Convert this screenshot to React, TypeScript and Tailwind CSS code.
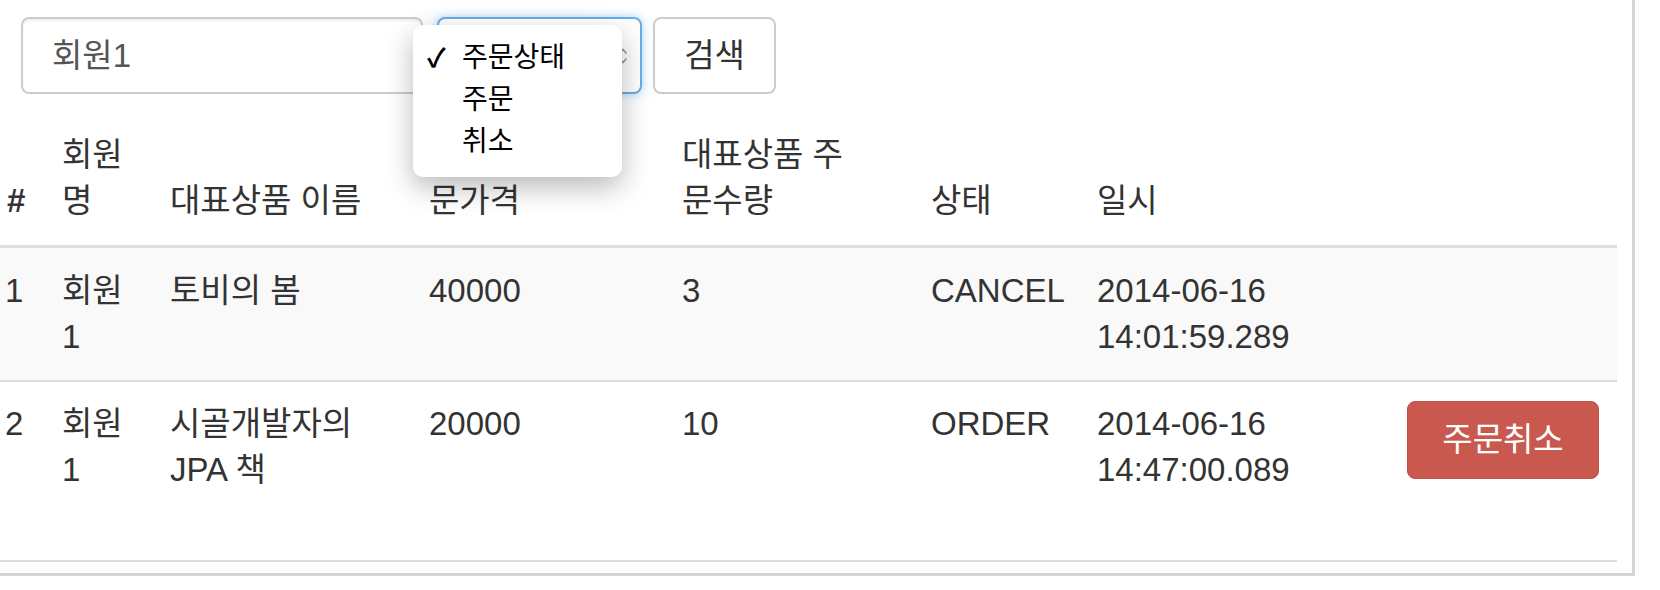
import React from 'react';

type Row = {
  id: string;
  member: string[];
  item: string[];
  price: string;
  count: string;
  status: string;
  date: string[];
  cancelable: boolean;
};

const rows: Row[] = [
  {
    id: '1',
    member: ['회원', '1'],
    item: ['토비의 봄'],
    price: '40000',
    count: '3',
    status: 'CANCEL',
    date: ['2014-06-16', '14:01:59.289'],
    cancelable: false,
  },
  {
    id: '2',
    member: ['회원', '1'],
    item: ['시골개발자의', 'JPA 책'],
    price: '20000',
    count: '10',
    status: 'ORDER',
    date: ['2014-06-16', '14:47:00.089'],
    cancelable: true,
  },
];

const Lines = ({ lines }: { lines: string[] }) => (
  <>
    {lines.map((l, i) => (
      <span key={i} className="block whitespace-nowrap">
        {l}
      </span>
    ))}
  </>
);

export default function App() {
  const th = 'px-[18px] pt-[20px] pb-[21px] align-bottom text-left font-normal border-b-[3px] border-[#dddddd]';
  const td = 'px-[18px] pb-[20px] align-top border-b-2 border-[#dddddd]';

  return (
    <div
      className="relative w-[1660px] h-[590px] bg-white overflow-hidden text-[#333333] text-[33px] leading-[46px]"
      style={{ fontFamily: '"Liberation Sans", "Noto Sans CJK KR", sans-serif' }}
    >
      <div className="w-[1635px] h-[576px] border-r-[3px] border-b-[3px] border-[#d4d4d4] pr-[15px]">
        {/* Search form */}
        <div className="flex items-start pt-[17px] pl-[21px]">
          <div className="w-[402px] h-[77px] border-2 border-[#cccccc] rounded-[8px] flex items-center pl-[29px] text-[#555555] shadow-[inset_0_2px_2px_rgba(0,0,0,0.06)]">
            회원1
          </div>
          <div className="relative ml-[14px] w-[205px] h-[77px] border-2 border-[#66afe9] rounded-[8px] shadow-[0_0_10px_rgba(102,175,233,0.55)]">
            <svg className="absolute right-[12px] top-[28px]" width="10" height="18" viewBox="0 0 10 18">
              <path d="M1.5 6.5 L5 2.5 L8.5 6.5" fill="none" stroke="#9a9a9a" strokeWidth="1.6" />
              <path d="M1.5 11.5 L5 15.5 L8.5 11.5" fill="none" stroke="#9a9a9a" strokeWidth="1.6" />
            </svg>
          </div>
          <button className="ml-[11px] w-[123px] h-[77px] border-2 border-[#cccccc] rounded-[8px] bg-white text-[#333333] flex items-center justify-center">
            검색
          </button>
        </div>

        {/* Orders table */}
        <table className="table-fixed border-separate border-spacing-0 mt-[18px] ml-[-11px] w-[1628px]">
          <colgroup>
            <col className="w-[55px]" />
            <col className="w-[108px]" />
            <col className="w-[259px]" />
            <col className="w-[253px]" />
            <col className="w-[249px]" />
            <col className="w-[166px]" />
            <col className="w-[310px]" />
            <col className="w-[228px]" />
          </colgroup>
          <thead>
            <tr>
              <th className="px-[18px] pt-[20px] pb-[21px] align-bottom text-left font-bold text-[33px] border-b-[3px] border-[#dddddd]">#</th>
              <th className={th}>
                <Lines lines={['회원', '명']} />
              </th>
              <th className={th}>대표상품 이름</th>
              <th className={th}>
                <Lines lines={['대표상품 주', '문가격']} />
              </th>
              <th className={th}>
                <Lines lines={['대표상품 주', '문수량']} />
              </th>
              <th className={th}>상태</th>
              <th className={th}>일시</th>
              <th className={th}></th>
            </tr>
          </thead>
          <tbody>
            {rows.map((r, idx) => {
              const cell = `${td} ${idx === 0 ? 'pt-[20px]' : 'pt-[19px]'}`;
              return (
                <tr key={r.id} className={idx === 0 ? 'bg-[#f9f9f9]' : 'bg-white'}>
                  <td className={`${cell} !pl-[16px]`}>{r.id}</td>
                  <td className={cell}>
                    <Lines lines={r.member} />
                  </td>
                  <td className={cell}>
                    <Lines lines={r.item} />
                  </td>
                  <td className={cell}>{r.price}</td>
                  <td className={cell}>{r.count}</td>
                  <td className={cell}>{r.status}</td>
                  <td className={cell}>
                    <Lines lines={r.date} />
                  </td>
                  <td className={cell}>
                    {r.cancelable && (
                      <button className="mb-[61px] w-[192px] h-[78px] rounded-[8px] bg-[#c9594f] border border-[#bf5048] text-white flex items-center justify-center">
                        주문취소
                      </button>
                    )}
                  </td>
                </tr>
              );
            })}
          </tbody>
        </table>
      </div>

      {/* Native select popup */}
      <div className="absolute z-10 left-[413px] top-[25px] w-[209px] h-[152px] rounded-[10px] bg-white shadow-[0_10px_28px_rgba(0,0,0,0.28)] pt-[12px] text-black text-[28px] leading-[42px] font-normal">
        {['주문상태', '주문', '취소'].map((o, i) => (
          <div key={o} className="flex items-center">
            <span className="w-[49px] pl-[14px] text-[26px] font-bold">{i === 0 ? '✓' : ''}</span>
            <span>{o}</span>
          </div>
        ))}
      </div>
    </div>
  );
}
